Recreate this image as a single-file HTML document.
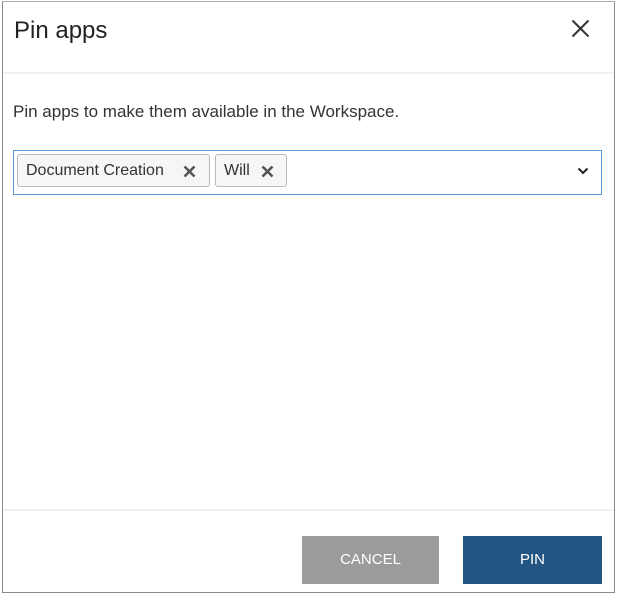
<!DOCTYPE html>
<html><head><style>
*{box-sizing:border-box;margin:0;padding:0}
body{width:618px;height:594px;background:#fff;font-family:"Liberation Sans",sans-serif;position:relative;overflow:hidden}
.dlg{position:absolute;left:2px;top:1px;width:613px;height:592px;border:1px solid #8a8a8a;border-top-color:#aaa}
.abs{position:absolute}
.title{left:14px;top:17px;font-size:24px;color:#222}
.hr{left:3px;width:611px;height:2px;background:#f0f0f0}
.desc{left:13px;top:102px;font-size:17px;color:#333}
.input{left:13px;top:150px;width:589px;height:45px;border:1px solid #5b9bd5}
.chip{top:154px;height:33px;border:1px solid #bbb;border-radius:3px;background:#f6f6f6;font-size:16px;color:#333;line-height:32px;padding-left:8px}
.btn{top:536px;height:48px;color:#fff;font-size:15px;text-align:center;line-height:48px}
</style></head><body>
<div class="dlg"></div>
<div class="abs title">Pin apps</div>
<svg class="abs" style="left:571px;top:19px" width="19" height="19" viewBox="0 0 19 19"><path d="M1.5 1.5L17.5 17.5M17.5 1.5L1.5 17.5" stroke="#333" stroke-width="2"/></svg>
<div class="abs hr" style="top:72px"></div>
<div class="abs desc">Pin apps to make them available in the Workspace.</div>
<div class="abs input"></div>
<div class="abs chip" style="left:17px;width:193px">Document Creation
<svg class="abs" style="left:165px;top:10px" width="13" height="13" viewBox="0 0 13 13"><path d="M1.5 1.5L11.5 11.5M11.5 1.5L1.5 11.5" stroke="#555" stroke-width="2.6"/></svg></div>
<div class="abs chip" style="left:215px;width:72px">Will
<svg class="abs" style="left:45px;top:10px" width="13" height="13" viewBox="0 0 13 13"><path d="M1.5 1.5L11.5 11.5M11.5 1.5L1.5 11.5" stroke="#555" stroke-width="2.6"/></svg></div>
<svg class="abs" style="left:577px;top:167px" width="12" height="8" viewBox="0 0 12 8"><path d="M1.5 1.5L6 6L10.5 1.5" stroke="#222" stroke-width="2" fill="none"/></svg>
<div class="abs hr" style="top:509px"></div>
<div class="abs btn" style="left:302px;width:137px;background:#9b9b9b">CANCEL</div>
<div class="abs btn" style="left:463px;width:139px;background:#235583">PIN</div>
</body></html>
